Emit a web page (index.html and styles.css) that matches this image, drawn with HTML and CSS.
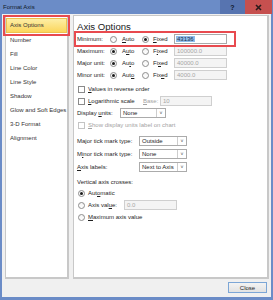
FILE: index.html
```html
<!DOCTYPE html>
<html>
<head>
    <meta charset="utf-8">
    <title>Format Axis</title>
    <link rel="stylesheet" href="styles.css">
</head>
<body>
    <div class="titlebar">
        <span class="title">Format Axis</span>
        <span class="tb-btn help">?</span>
        <span class="tb-btn close">
            <svg width="7" height="7" viewBox="0 0 7 7"><path d="M1 1L6 6M6 1L1 6" stroke="#2a1a1a" stroke-width="1.6"/></svg>
        </span>
    </div>

    <div class="dialog">
        <div class="main">
            <ul class="nav">
                <li class="active">Axis Options</li>
                <li>Number</li>
                <li>Fill</li>
                <li>Line Color</li>
                <li>Line Style</li>
                <li>Shadow</li>
                <li>Glow and Soft Edges</li>
                <li>3-D Format</li>
                <li>Alignment</li>
            </ul>

            <div class="pane">
                <h2>Axis Options</h2>

                <div class="row axis-row highlight">
                    <span class="lbl">Minimum:</span>
                    <span class="radio"></span><span class="opt"><u>A</u>uto</span>
                    <span class="radio on"></span><span class="opt"><u>F</u>ixed</span>
                    <span class="field active-field"><span class="sel">43136</span></span>
                </div>
                <div class="row axis-row">
                    <span class="lbl">Maximum:</span>
                    <span class="radio on"></span><span class="opt">A<u>u</u>to</span>
                    <span class="radio"></span><span class="opt">F<u>i</u>xed</span>
                    <span class="field">100000.0</span>
                </div>
                <div class="row axis-row">
                    <span class="lbl">Major unit:</span>
                    <span class="radio on"></span><span class="opt">Au<u>t</u>o</span>
                    <span class="radio"></span><span class="opt">Fi<u>x</u>ed</span>
                    <span class="field">40000.0</span>
                </div>
                <div class="row axis-row">
                    <span class="lbl">Minor unit:</span>
                    <span class="radio on"></span><span class="opt">Aut<u>o</u></span>
                    <span class="radio"></span><span class="opt">Fix<u>e</u>d</span>
                    <span class="field">4000.0</span>
                </div>

                <div class="row check-row first-check">
                    <span class="check"></span><span><u>V</u>alues in reverse order</span>
                </div>
                <div class="row check-row">
                    <span class="check"></span><span class="log-text"><u>L</u>ogarithmic scale</span>
                    <span class="muted base"><u>B</u>ase:</span>
                    <span class="field base-field">10</span>
                </div>
                <div class="row">
                    <span class="lbl-units">Display <u>u</u>nits:</span>
                    <span class="select units"><span>None</span><span class="arrow">&#709;</span></span>
                </div>
                <div class="row check-row muted">
                    <span class="check disabled"></span><span><u>S</u>how display units label on chart</span>
                </div>

                <div class="row tick-row first-tick">
                    <span class="lbl-tick">Ma<u>j</u>or tick mark type:</span>
                    <span class="select"><span>Outside</span><span class="arrow">&#709;</span></span>
                </div>
                <div class="row tick-row">
                    <span class="lbl-tick">M<u>i</u>nor tick mark type:</span>
                    <span class="select"><span>None</span><span class="arrow">&#709;</span></span>
                </div>
                <div class="row tick-row">
                    <span class="lbl-tick"><u>A</u>xis labels:</span>
                    <span class="select"><span>Next to Axis</span><span class="arrow">&#709;</span></span>
                </div>

                <div class="row cross-title">Vertical axis crosses:</div>
                <div class="row cross-row">
                    <span class="radio on"></span><span>Aut<u>o</u>matic</span>
                </div>
                <div class="row cross-row">
                    <span class="radio"></span><span class="cross-lbl">Axis val<u>u</u>e:</span>
                    <span class="field">0.0</span>
                </div>
                <div class="row cross-row">
                    <span class="radio"></span><span><u>M</u>aximum axis value</span>
                </div>
            </div>
        </div>

        <div class="footer">
            <button class="btn">Close</button>
        </div>
    </div>
</body>
</html>
```

FILE: styles.css
```css
html, body {
    margin: 0;
    padding: 0;
}
body {
    width: 273px;
    height: 300px;
    overflow: hidden;
    background: #6b8cc7;
    font-family: "Liberation Sans", Arial, sans-serif;
    font-size: 6px;
    color: #1e1e1e;
}
.titlebar {
    height: 14px;
    display: flex;
    align-items: center;
    padding-right: 1px;
}
.title {
    flex: 1;
    padding-left: 3px;
    font-size: 6px;
    color: #121a28;
}
.tb-btn {
    height: 14px;
    display: flex;
    align-items: center;
    justify-content: center;
}
.help {
    width: 25px;
    background: #5774b0;
    font-weight: bold;
    font-size: 7px;
    color: #10182a;
}
.close {
    width: 27px;
    background: #c6504f;
}
.dialog {
    background: #f0f0f0;
    margin: 0 2px;
    height: 283px;
}
.main {
    display: flex;
    gap: 4px;
    height: 264px;
    padding: 1px 2px 0 3px;
}
.nav {
    width: 64px;
    margin: 0;
    padding: 2px 0 0;
    list-style: none;
    background: #fff;
    border: 1px solid #c8c8c8;
    border-right: 2px solid #c8c8c8;
    border-bottom: 2px solid #c8c8c8;
    box-sizing: border-box;
}
.nav li {
    height: 14px;
    line-height: 14px;
    padding-left: 4px;
    color: #333;
}
.nav li.active {
    height: 15px;
    line-height: 13px;
    padding-left: 3px;
    background: linear-gradient(#fdeea6, #fbd65c);
    border: 1px solid #efc14e;
    box-sizing: border-box;
    outline: 2px solid #e84a4f;
    outline-offset: 1px;
}
.pane {
    flex: 1;
    background: #fff;
    border: 1px solid #c8c8c8;
    border-right: 2px solid #c8c8c8;
    border-bottom: 2px solid #c8c8c8;
    box-sizing: border-box;
    padding: 4px 0 0 3px;
}
.pane h2 {
    margin: 0;
    font-size: 9.6px;
    font-weight: normal;
    line-height: 13px;
    color: #222;
}
.row {
    display: flex;
    align-items: center;
    height: 12px;
    white-space: nowrap;
}
.axis-row .lbl {
    width: 33px;
}
.opt {
    width: 20px;
    margin-left: 5px;
}
.opt + .radio + .opt {
    width: 21px;
    margin-left: 4px;
}
.highlight {
    width: 158px;
    margin-left: -1px;
    padding-left: 1px;
    box-sizing: border-box;
    outline: 2px solid #e84a4f;
}
.radio {
    width: 7px;
    height: 7px;
    border: 1px solid #8d8d8d;
    border-radius: 50%;
    box-sizing: border-box;
    background: linear-gradient(#f4f4f4, #fff);
    display: flex;
    align-items: center;
    justify-content: center;
    flex-shrink: 0;
}
.radio.on::after {
    content: "";
    width: 3px;
    height: 3px;
    border-radius: 50%;
    background: #1b1b1b;
}
.field {
    width: 53px;
    height: 10px;
    line-height: 8px;
    border: 1px solid #cfcfcf;
    background: #f4f4f4;
    color: #a6a6a6;
    box-sizing: border-box;
    padding-left: 2px;
}
.active-field {
    background: #fff;
    border-color: #a9a9a9;
    padding-left: 1px;
}
.sel {
    background: #8fbdea;
    color: #1b2c4a;
    padding: 0 1px;
}
.check {
    width: 7px;
    height: 7px;
    border: 1px solid #8a8a8a;
    background: #fff;
    box-sizing: border-box;
    margin: 0 3px 0 1px;
    flex-shrink: 0;
}
.check.disabled {
    border-color: #c4c4c4;
}
.first-check {
    margin-top: 2px;
}
.log-text {
    width: 55px;
}
.muted {
    color: #a3a3a3;
}
.base {
    width: 17px;
}
.base-field {
    width: 52px;
}
.lbl-units {
    width: 43px;
}
.select {
    width: 48px;
    height: 10px;
    border: 1px solid #ababab;
    background: #fff;
    box-sizing: border-box;
    display: flex;
    align-items: center;
    padding-left: 2px;
}
.select span:first-child {
    flex: 1;
}
.units {
    width: 46px;
}
.arrow {
    width: 8px;
    height: 8px;
    border-left: 1px solid #cdcdcd;
    font-size: 5px;
    line-height: 8px;
    text-align: center;
    color: #444;
}
.tick-row {
    height: 13px;
}
.first-tick {
    margin-top: 3px;
}
.lbl-tick {
    width: 62px;
}
.cross-title {
    margin-top: 3px;
    height: 11px;
}
.cross-row .radio {
    margin: 0 3px 0 1px;
}
.cross-lbl {
    width: 36px;
}
.footer {
    display: flex;
    justify-content: flex-end;
    padding: 3px 4px 0 0;
}
.btn {
    width: 39px;
    height: 11px;
    padding: 0;
    font-family: inherit;
    font-size: 6px;
    color: #222;
    border: 1px solid #7ca6d6;
    background: linear-gradient(#f3f3f3, #e2e2e2);
}
```
